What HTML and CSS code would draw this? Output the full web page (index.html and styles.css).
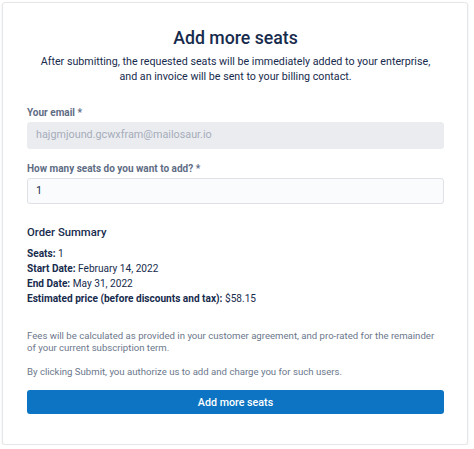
FILE: index.html
```html
<!DOCTYPE html>
<html>
<head>
<meta charset="utf-8">
<link rel="stylesheet" href="styles.css">
</head>
<body>
<div class="card">
  <h1 class="title">Add more seats</h1>
  <p class="intro">After submitting, the requested seats will be immediately added to your enterprise,<br>and an invoice will be sent to your billing contact.</p>
  <div class="field field-email">
    <label class="label">Your email *</label>
    <div class="input input-disabled">hajgmjound.gcwxfram@mailosaur.io</div>
  </div>
  <div class="field field-seats">
    <label class="label">How many seats do you want to add? *</label>
    <div class="input">1</div>
  </div>
  <h2 class="summary-title">Order Summary</h2>
  <ul class="summary">
    <li><b>Seats:</b> 1</li>
    <li><b>Start Date:</b> February 14, 2022</li>
    <li><b>End Date:</b> May 31, 2022</li>
    <li><b>Estimated price (before discounts and tax):</b> $58.15</li>
  </ul>
  <p class="note note-fees">Fees will be calculated as provided in your customer agreement, and pro-rated for the remainder of your current subscription term.</p>
  <p class="note note-auth">By clicking Submit, you authorize us to add and charge you for such users.</p>
  <button class="submit">Add more seats</button>
</div>
</body>
</html>
```
FILE: styles.css
```css
* { box-sizing: border-box; }
html, body { margin: 0; padding: 0; background: #fff; }
body {
  font-family: Roboto, "Noto Sans", sans-serif;
  color: #172b4d;
  padding: 2px 0 0 2px;
}
.card {
  width: 466px;
  height: 443px;
  border: 1px solid #e4e6ea;
  border-radius: 3px;
  box-shadow: 0 1px 2px rgba(9, 30, 66, 0.12);
  padding: 24px 23px 0 24px;
  display: flex;
  flex-direction: column;
}
.title {
  margin: 0;
  font-size: 17.7px;
  line-height: 22px;
  font-weight: 500;
  text-align: center;
  color: #172b4d;
}
.intro {
  margin: 5px 0 0 0;
  font-size: 10.7px;
  line-height: 15px;
  text-align: center;
  color: #172b4d;
}
.field { display: flex; flex-direction: column; }
.field-email { margin-top: 23px; }
.field-seats { margin-top: 14px; }
.label {
  font-size: 10px;
  line-height: 12px;
  font-weight: 700;
  color: #5e6c84;
  margin-bottom: 3px;
}
.input {
  height: 27px;
  border: 1.5px solid #dfe1e6;
  border-radius: 3px;
  background: #fafbfc;
  font-size: 10.8px;
  line-height: 24px;
  padding: 0 8px;
  color: #172b4d;
}
.input-disabled {
  background: #ebecf0;
  border-color: #ebecf0;
  color: #a5adba;
}
.field-seats .input { height: 26px; line-height: 23px; }
.summary-title {
  margin: 21.5px 0 0 0;
  font-size: 11.3px;
  line-height: 14px;
  font-weight: 500;
  color: #172b4d;
}
.summary {
  list-style: none;
  margin: 6px 0 0 0;
  padding: 0;
  font-size: 10.1px;
  line-height: 15px;
  color: #172b4d;
}
.summary b { font-weight: 700; }
.note {
  margin: 0;
  font-size: 9.6px;
  line-height: 12.5px;
  color: #6b778c;
}
.note-fees { margin-top: 24px; }
.note-auth { margin-top: 11.5px; }
.submit {
  margin-top: 11.5px;
  height: 24px;
  border: 0;
  border-radius: 3px;
  background: #0c74c2;
  color: #fff;
  font-family: inherit;
  font-size: 10.7px;
  font-weight: 500;
  cursor: pointer;
}
```
